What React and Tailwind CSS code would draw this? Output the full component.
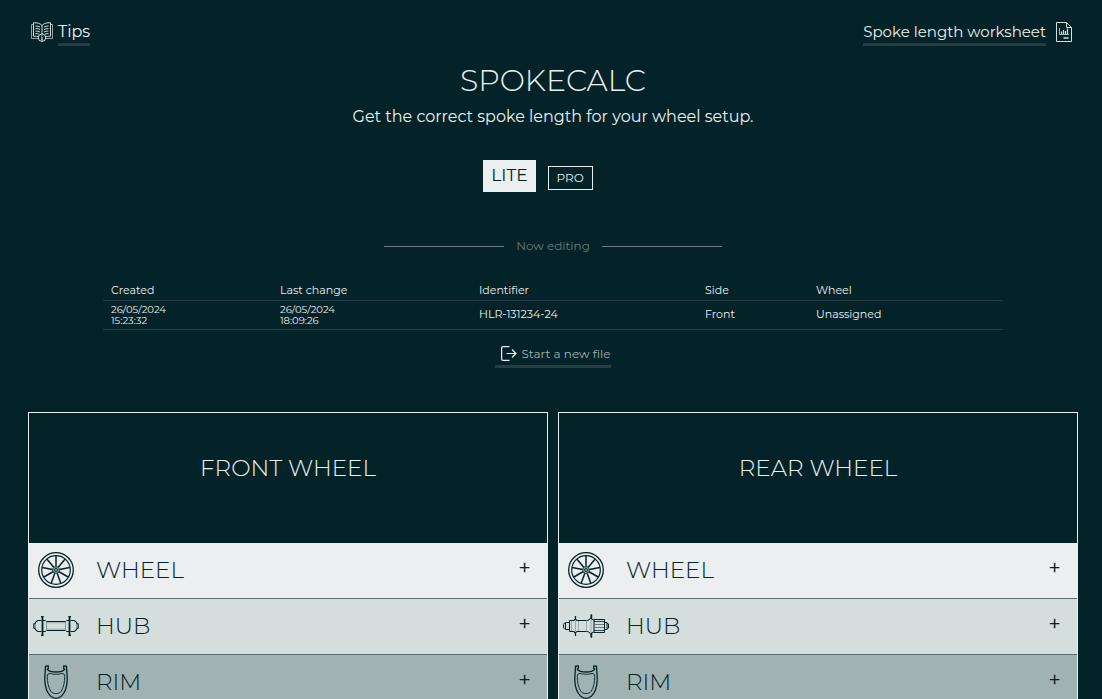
import React from 'react';

const ROW_TONES = {
    wheel: 'bg-[#ebeff0]',
    hub: 'bg-[#d3dedd]',
    rim: 'bg-[#a1b2b2]',
};

const FILE_COLUMNS = [
    { label: 'Created', width: 'w-[169px]', value: ['26/05/2024', '15:23:32'] },
    { label: 'Last change', width: 'w-[199px]', value: ['26/05/2024', '18:09:26'] },
    { label: 'Identifier', width: 'w-[226px]', value: 'HLR-131234-24' },
    { label: 'Side', width: 'w-[111px]', value: 'Front' },
    { label: 'Wheel', width: 'w-auto', value: 'Unassigned' },
];

const BookIcon = () => (
    <svg className="mt-px" width="22" height="20" viewBox="0 0 22 20" fill="none" stroke="#ebeff0" strokeWidth=".9" aria-hidden="true">
        <path d="M2.500 2.500H.5v14h7.500M19.500 2.500h2v14H14" stroke="#a1b2b2" />
        <path d="M11 3.500C9 1.300 6 .5 2.500.8v13.400c2.500 0 4 .2 5.500.8M11 3.500c2-2.200 5-3 8.500-2.700v13.400c-2.500 0-4 .2-5.500.8M11 3.500v8.500" />
        <path d="M4.500 4c1.700 0 3.200.3 4.500 1M4.500 6.500c1.700 0 3.200.3 4.500 1M4.500 9c1.700 0 3.200.3 4.500 1M4.500 11.500c1.500 0 2.600.2 3.500.6M17.500 4c-1.700 0-3.200.3-4.500 1M17.500 6.500c-1.700 0-3.200.3-4.500 1M17.500 9c-1.700 0-3.200.3-4.500 1M17.500 11.500c-1.500 0-2.600.2-3.500.6" />
        <circle cx="11" cy="15.700" r="3.700" />
        <path d="M11 15v3M10 15h1M10 18h2M10.500 13.600h1" />
    </svg>
);

const WorksheetIcon = () => (
    <svg className="mt-px" width="16" height="20" viewBox="0 0 16 20" fill="none" stroke="#d3dedd" aria-hidden="true">
        <path d="M10.500.5H.5v19h15V5.500zM10.500.5v5h5" />
        <path d="M3.500 6v6.500h9.500" strokeWidth=".8" />
        <path d="M5.500 12V9.500M7.500 12V8M9.500 12V9M11.500 12V6.500" strokeWidth="1.200" />
        <path d="M7.500 16h5" stroke="#a1b2b2" strokeWidth="2" />
    </svg>
);

const ExportIcon = () => (
    <svg width="16" height="15" viewBox="0 0 16 15" fill="none" stroke="#ebeff0" strokeWidth="1.200" aria-hidden="true">
        <path d="M8.500.6H2A1.400 1.400 0 0 0 .6 2v11A1.400 1.400 0 0 0 2 14.400h6.500" />
        <path d="M5.500 7.500h9.500M11 3.500l4 4-4 4" />
    </svg>
);

const SPOKE_ANGLES = [0, 40, 80, 120, 160, 200, 240, 280, 320];

const WheelIcon = () => (
    <svg width="36" height="36" viewBox="0 0 36 36" fill="none" stroke="#042328" aria-hidden="true">
        <circle cx="18" cy="18" r="17.300" strokeWidth="1.300" />
        <circle cx="18" cy="18" r="14.300" strokeWidth="1.200" />
        {SPOKE_ANGLES.map((angle) => (
            <path key={angle} d="M18 14.500V4" strokeWidth="1.500" transform={`rotate(${angle} 18 18)`} />
        ))}
        <circle cx="18" cy="18" r="3.400" fill="#a1b2b2" strokeWidth=".9" />
        <circle cx="18" cy="18" r="1.500" strokeWidth=".9" />
    </svg>
);

const FrontHubIcon = () => (
    <svg width="46" height="20" viewBox="0 0 46 20" fill="none" stroke="#042328" strokeWidth="1.200" aria-hidden="true">
        <path d="M8.500 4.500H5C3 5 2.500 6.500 2 7.500L.8 8v4l1.200.5c.5 1 1 2.500 3 3h3.500M37.500 4.500H41c2 .5 2.500 2 3 3l1.200.5v4l-1.200.5c-.5 1-1 2.500-3 3h-3.500" />
        <path d="M2.500 7.500v5M43.500 7.500v5" stroke="#718386" strokeWidth=".8" />
        <path d="M9.500.5v19M36.500.5v19" strokeWidth="1.800" />
        <path d="M8 .6h2.500M35.500.6H38M8 19.400h2.500M35.500 19.400H38" />
        <path d="M10 4.500h2.500l1 1M10 15.500h2.500l1-1M36 4.500h-2.500l-1 1M36 15.500h-2.500l-1-1" strokeWidth="1" />
        <path d="M13.500 5.500v9M32.500 5.500v9" stroke="#718386" strokeWidth=".8" />
        <path d="M13.500 5.500h19M13.500 14.500h19" />
        <path d="M13.500 6.800h19M13.500 13.200h19" stroke="#8c9c9e" strokeWidth=".8" />
    </svg>
);

const RearHubIcon = () => (
    <svg width="46" height="24" viewBox="0 0 46 24" fill="none" stroke="#042328" strokeWidth="1" aria-hidden="true">
        <path d="M2.500 9h-1l-1 1.500v3l1 1.500h1zM2.500 8.500h4v7h-4M6.500 6.500h5M6.500 17.500h5M6.500 6.500v11" />
        <path d="M8.500 7v10M12.500 7v10" stroke="#8c9c9e" strokeWidth=".8" />
        <path d="M12.500 2v3.500l1.500 1M12.500 22v-3.500l1.500-1M11 6l1.500-1M11 18l1.500 1" strokeWidth="1.300" />
        <path d="M14 6.500h9.500c2 0 3.500-1 4-2.500M14 17.500h9.500c2 0 3.500 1 4 2.500" />
        <path d="M15.500 7v10M23.500 7v10" stroke="#8c9c9e" strokeWidth=".8" />
        <path d="M28.500.5v4.500l2.500 1v12l-2.500 1v4.500" strokeWidth="1.100" />
        <path d="M28.300.5v4M28.300 19.500v4" strokeWidth="1.800" />
        <path d="M28 5v14" stroke="#8c9c9e" strokeWidth=".8" />
        <path d="M31 5.500h10.500v13H31" />
        <path d="M31 7.500h10.500M31 16.500h10.500" strokeWidth=".8" />
        <path d="M32 10.500h9M32 13.500h9" stroke="#4c6063" strokeWidth=".8" />
        <path d="M41.500 8.500h2.500v7h-2.500M44 9.500l1.500.5v4l-1.500.5" />
    </svg>
);

const RimIcon = () => (
    <svg width="24" height="34" viewBox="0 0 24 34" fill="none" stroke="#042328" strokeLinejoin="round" aria-hidden="true">
        <path d="M1.500 1.200 4.300 1v2.500l-1 .8C5 6.500 8 7 12 7s7-.5 8.700-2.700l-1-.8V1l2.800.2C22.500 5 23.300 10 23.200 15c-.2 7-2.200 12.500-5.700 16-3.300 3-7.700 3-11 0C3 27.500 1 22 .8 15 .7 10 1.500 5 1.500 1.200z" strokeWidth="1.300" />
        <path d="M6 8.500c3.500 1 8.500 1 12 0 1.800 0 2.700.8 2.700 2.800 0 6-1 11.200-3.700 15.200-1 1.500-2.500 2-5 2s-4-.5-5-2c-2.700-4-3.700-9.200-3.700-15.200C3.300 9.300 4.200 8.500 6 8.500z" strokeWidth=".9" />
    </svg>
);

const PanelRow = ({ icon, label, tone }) => (
    <button type="button" className={`flex h-14 w-full items-center border-b border-[#5a6b6f] pr-4 text-[#042328] ${tone}`}>
        <span className="flex w-[54px] shrink-0 justify-center">{icon}</span>
        <span className="pl-[13px] text-[23px] font-light">{label}</span>
        <span className="ml-auto pb-0.5 text-[22px] leading-6">+</span>
    </button>
);

const WheelPanel = ({ title, hubIcon }) => (
    <section className="border border-[#ebeff0]">
        <h2 className="flex h-[130px] items-center justify-center pb-[18px] text-[23px] font-light">{title}</h2>
        <PanelRow icon={<WheelIcon />} label="WHEEL" tone={ROW_TONES.wheel} />
        <PanelRow icon={hubIcon} label="HUB" tone={ROW_TONES.hub} />
        <PanelRow icon={<RimIcon />} label="RIM" tone={ROW_TONES.rim} />
    </section>
);

const FileTable = () => (
    <table className="mx-auto mt-6 w-full max-w-[900px] table-fixed border-collapse text-left text-[11px]">
        <thead>
            <tr className="h-5 border-b border-[#283c44]">
                {FILE_COLUMNS.map(({ label, width }) => (
                    <th key={label} scope="col" className={`px-2 font-normal leading-4 ${width}`}>{label}</th>
                ))}
            </tr>
        </thead>
        <tbody>
            <tr className="h-[29px] border-b border-[#283c44]">
                {FILE_COLUMNS.map(({ label, value }) => (
                    <td key={label} className="px-2">
                        {Array.isArray(value) ? (
                            <div className="text-[10px] leading-[11px]">
                                {value.map((line) => <div key={line}>{line}</div>)}
                            </div>
                        ) : value}
                    </td>
                ))}
            </tr>
        </tbody>
    </table>
);

export default function App() {
    return (
        <div className="min-h-screen bg-[#042328] pt-[21px] pr-6 pl-7 font-['Montserrat','Inter',sans-serif] text-[#ebeff0]">
            <header className="flex items-start justify-between pr-1.5 pl-[3px]">
                <div className="flex items-start gap-[5px]">
                    <BookIcon />
                    <a href="#tips" className="border-b-3 border-[#283c44] text-base leading-[22px]">Tips</a>
                </div>
                <div className="flex items-start gap-[10px]">
                    <a href="#worksheet" className="border-b-3 border-[#283c44] text-[15px] leading-[22px]">Spoke length worksheet</a>
                    <WorksheetIcon />
                </div>
            </header>

            <main>
                <h1 className="mt-[15px] text-center text-3xl leading-10 font-light">SPOKECALC</h1>
                <p className="text-center text-base leading-8">Get the correct spoke length for your wheel setup.</p>

                <div className="mt-[27px] flex items-center justify-center gap-3 pr-[30px]">
                    <button type="button" className="h-8 bg-[#ebeff0] px-2 text-[17px] text-[#042328]">LITE</button>
                    <button type="button" className="mt-1 h-6 border border-[#ebeff0] px-2 text-xs">PRO</button>
                </div>

                <div className="mt-11 flex items-center justify-center gap-3 text-xs leading-5 text-[#6b7c80]">
                    <span className="w-[120px] border-t border-[#6b7c80]" />
                    Now editing
                    <span className="w-[120px] border-t border-[#6b7c80]" />
                </div>

                <FileTable />

                <div className="mt-[13px] flex justify-center">
                    <button type="button" className="flex items-center gap-1 border-b-3 border-[#283c44] pl-1.5 text-xs leading-[22px] text-[#a1b2b2]">
                        <ExportIcon />
                        Start a new file
                    </button>
                </div>

                <div className="mt-11 grid grid-cols-2 gap-[10px]">
                    <WheelPanel title="FRONT WHEEL" hubIcon={<FrontHubIcon />} />
                    <WheelPanel title="REAR WHEEL" hubIcon={<RearHubIcon />} />
                </div>
            </main>
        </div>
    );
}
